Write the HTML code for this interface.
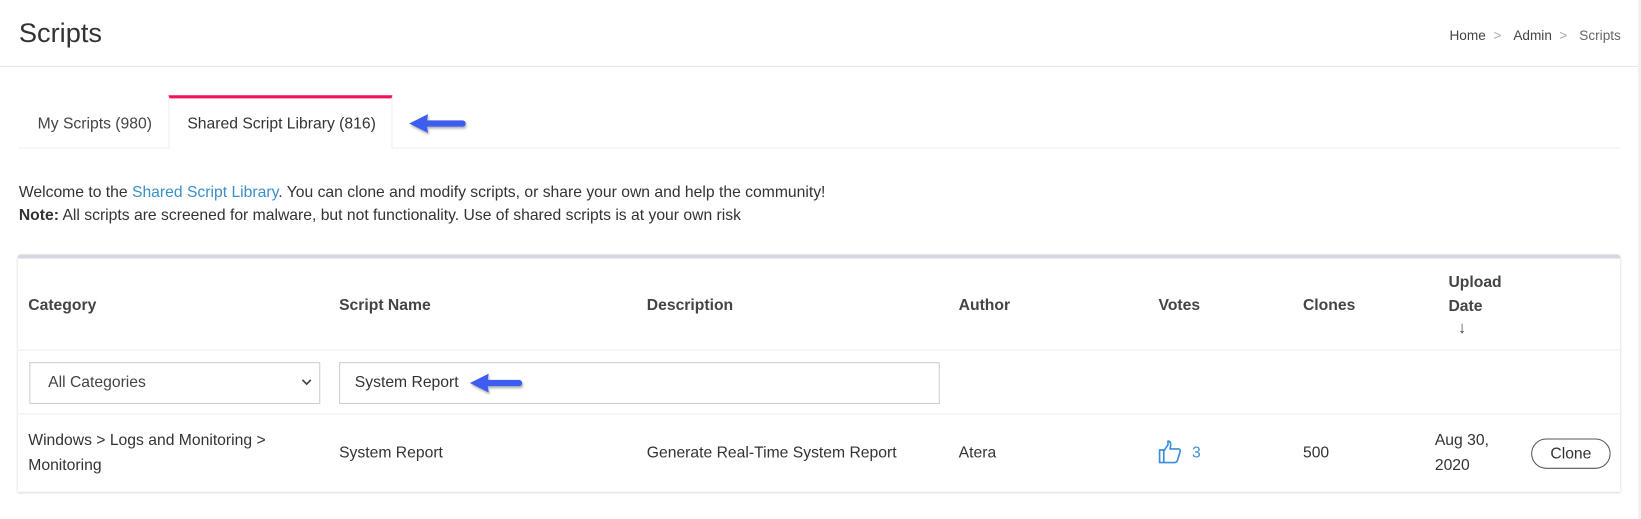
<!DOCTYPE html>
<html><head><meta charset="utf-8"><style>
*{box-sizing:border-box;margin:0;padding:0}
body{width:1641px;height:519px;background:#fff;font-family:"Liberation Sans",sans-serif;color:#333;position:relative;overflow:hidden;font-size:15px}
#w{position:absolute;left:0;top:0;width:1568px;height:496px;transform:scale(1.04656);transform-origin:0 0}
.abs{position:absolute;white-space:nowrap}
.h1{left:18px;top:16px;font-size:26px;color:#333}
.bc{top:26px;font-size:13px;color:#444}
.sep{color:#aaa}
.hr{position:absolute;left:0;top:63px;width:1565px;height:1px;background:#e8e8ea}
.sb{position:absolute;left:1638px;top:0;width:3px;height:519px;background:#f1f1f1}
</style></head><body>
<div class="sb"></div>
<div id="w">
<div class="abs h1">Scripts</div>
<div class="abs bc" style="left:1385px">Home</div>
<div class="abs bc sep" style="left:1427px">&gt;</div>
<div class="abs bc" style="left:1446px">Admin</div>
<div class="abs bc sep" style="left:1490px">&gt;</div>
<div class="abs bc" style="left:1509px;color:#666">Scripts</div>
<div class="hr"></div>

<div style="position:absolute;left:18px;top:141px;width:1530px;height:1px;background:#eee"></div>
<div class="abs" style="left:36px;top:110px;color:#444">My Scripts (980)</div>
<div style="position:absolute;left:161px;top:91px;width:214px;height:51px;border-top:3px solid #f0145a;border-left:1px solid #eee;border-right:1px solid #eee;background:#fff"></div>
<div class="abs" style="left:179px;top:110px;color:#333">Shared Script Library (816)</div>
<svg class="abs" style="left:388px;top:106px" width="60" height="24" viewBox="0 0 60 24"><path d="M20 9 H54 a3 3 0 0 1 0 6 H20 L21 21 L3 12 L21 3 Z" fill="#3d5cf0" filter="drop-shadow(1px 2px 1px rgba(0,0,0,.3))"/></svg>

<div class="abs" style="left:18px;top:175px;color:#333">Welcome to the <span style="color:#3a8fc9">Shared Script Library</span>. You can clone and modify scripts, or share your own and help the community!</div>
<div class="abs" style="left:18px;top:197px;color:#333"><b>Note:</b> All scripts are screened for malware, but not functionality. Use of shared scripts is at your own risk</div>

<div style="position:absolute;left:17px;top:243px;width:1531px;height:227px;border-top:4px solid #d6d7e0;border-radius:3px 3px 0 0;box-shadow:0 1px 2px rgba(0,0,0,.15)"></div>
<div style="position:absolute;left:17px;top:334px;width:1531px;height:1px;background:#eee"></div>
<div style="position:absolute;left:17px;top:395px;width:1531px;height:1px;background:#eee"></div>
<div class="abs" style="left:27px;top:283px;font-weight:bold;color:#444">Category</div>
<div class="abs" style="left:324px;top:283px;font-weight:bold;color:#444">Script Name</div>
<div class="abs" style="left:618px;top:283px;font-weight:bold;color:#444">Description</div>
<div class="abs" style="left:916px;top:283px;font-weight:bold;color:#444">Author</div>
<div class="abs" style="left:1107px;top:283px;font-weight:bold;color:#444">Votes</div>
<div class="abs" style="left:1245px;top:283px;font-weight:bold;color:#444">Clones</div>
<div class="abs" style="left:1384px;top:258px;font-weight:bold;color:#444;line-height:23px">Upload<br>Date</div>
<div class="abs" style="left:1393px;top:305px;font-size:16px;color:#444">↓</div>

<div style="position:absolute;left:28px;top:346px;width:278px;height:40px;border:1px solid #ccd;"></div>
<div class="abs" style="left:46px;top:357px;color:#444">All Categories</div>
<svg class="abs" style="left:288px;top:362px" width="10" height="7" viewBox="0 0 10 7"><path d="M1 1 L5 5 L9 1" stroke="#444" stroke-width="1.6" fill="none"/></svg>
<div style="position:absolute;left:324px;top:346px;width:574px;height:40px;border:1px solid #ccd;"></div>
<div class="abs" style="left:339px;top:357px;color:#333">System Report</div>
<svg class="abs" style="left:446px;top:354px" width="60" height="24" viewBox="0 0 60 24"><path d="M20 9 H50 a3 3 0 0 1 0 6 H20 L21 21 L3 12 L21 3 Z" fill="#3d5cf0" filter="drop-shadow(1px 2px 1px rgba(0,0,0,.3))"/></svg>

<div class="abs" style="left:27px;top:409px;color:#333;line-height:24px">Windows &gt; Logs and Monitoring &gt;<br>Monitoring</div>
<div class="abs" style="left:324px;top:424px">System Report</div>
<div class="abs" style="left:618px;top:424px">Generate Real-Time System Report</div>
<div class="abs" style="left:916px;top:424px">Atera</div>
<svg class="abs" style="left:1106px;top:420px" width="24" height="24" viewBox="0 0 24 24"><path d="M2 10 H6 V22 H2 Z M6 11 L10 5 V1.5 C12 1.5 13 3 12.5 6 L12 9 H20 C21.5 9 22 10.5 21.5 12 L19 20 C18.5 21.5 17.5 22 16 22 H6" stroke="#3a8fd9" stroke-width="1.6" fill="none" stroke-linejoin="round"/></svg>
<div class="abs" style="left:1139px;top:424px;color:#3a8fd9">3</div>
<div class="abs" style="left:1245px;top:424px">500</div>
<div class="abs" style="left:1371px;top:409px;line-height:24px">Aug 30,<br>2020</div>
<div style="position:absolute;left:1463px;top:419px;width:76px;height:29px;border:1px solid #555;border-radius:15px;text-align:center;line-height:27px;color:#333">Clone</div>
</div>
</body></html>
